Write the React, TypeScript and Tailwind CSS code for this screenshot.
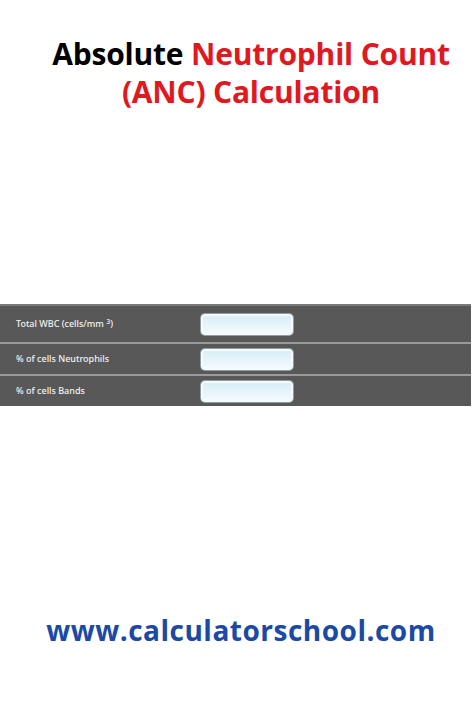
const rows = [
  { label: 'Total WBC (cells/mm', sup: '3', close: ')' },
  { label: '% of cells Neutrophils' },
  { label: '% of cells Bands' },
];

export default function App() {
  return (
    <div className="w-[474px] h-[711px] bg-white flex flex-col font-['Open_Sans',sans-serif]">
      <h1 className="pt-[35px] pl-[28px] text-center text-[30px] leading-[38px] font-bold tracking-[-0.2px]">
        <span className="text-black">Absolute </span>
        <span className="text-[#e0191f]">
          Neutrophil Count
          <br />
          (ANC) Calculation
        </span>
      </h1>

      <div className="mt-[193px] mr-[3px] bg-[#585858] border-t-2 border-[#7a7a7a] font-['Noto_Sans',sans-serif]">
        {rows.map((row, i) => (
          <div
            key={i}
            className={`flex items-center ${i === 0 ? 'h-[36px]' : 'h-[32px]'} ${
              i > 0 ? 'border-t-2 border-[#9a9a9a]' : ''
            }`}
          >
            <div className="w-[201px] pl-[16px] text-[9px] font-medium text-[#f2f2f2]">
              {row.label}
              {row.sup && (
                <>
                  {' '}
                  <sup className="text-[7px]">{row.sup}</sup>
                  {row.close}
                </>
              )}
            </div>
            <input
              type="text"
              className="w-[92px] h-[21px] rounded-[4px] border-2 border-[#f6fafb] bg-gradient-to-b from-[#d9eef8] to-[#f3fafd] shadow-[0_0_0_1px_#8aa0a4] outline-none"
            />
          </div>
        ))}
      </div>

      <div className="mt-[203px] pl-[8px] text-center text-[28px] font-bold text-[#1a4aa5] tracking-[0.5px]">
        www.calculatorschool.com
      </div>
    </div>
  );
}
